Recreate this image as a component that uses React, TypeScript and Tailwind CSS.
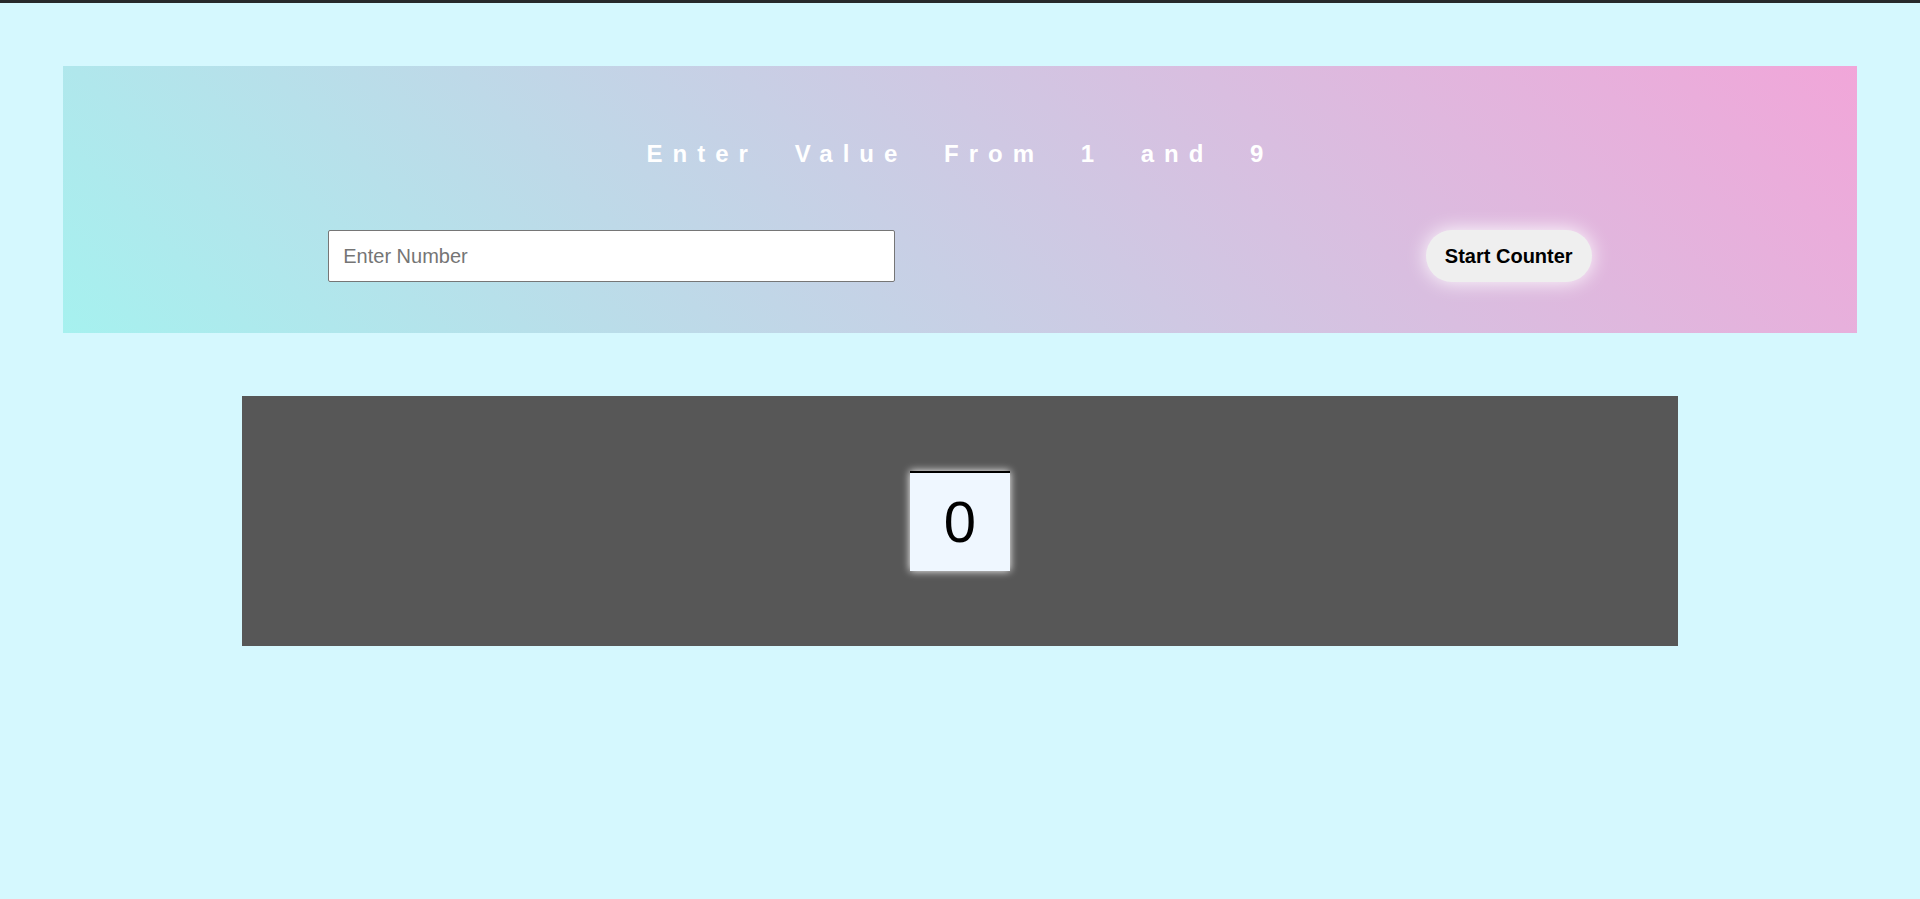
import React, { useState } from 'react';

const App: React.FC = () => {
    const [value, setValue] = useState('');
    const [count] = useState(0);

    return (
        <div className="min-h-[899px] bg-[#d5f8fe] border-t-[3px] border-[#27292b] font-['Liberation_Sans',Arial,sans-serif] pt-[63px]">
            <header className="w-[1794px] mx-auto bg-[linear-gradient(45deg,#a6f1ef,#f1a6d9)] pt-[74px] pb-[51px]">
                <h1 className="text-center text-white font-bold text-[24px] leading-[28px] tracking-[10px] [word-spacing:20px] mb-[62px]">
                    Enter Value From 1 and 9
                </h1>
                <div className="flex justify-around items-center">
                    <input
                        type="number"
                        value={value}
                        onChange={(e) => setValue(e.target.value)}
                        placeholder="Enter Number"
                        className="w-[567px] h-[52px] px-[14px] text-[20px] bg-white text-black border border-[#767676] rounded-[2px] placeholder:text-[#757575] outline-none"
                    />
                    <button className="w-[166px] h-[52px] rounded-full bg-[#efefef] text-black font-bold text-[20px] shadow-[0_0_20px_#fff]">
                        Start Counter
                    </button>
                </div>
            </header>

            <section className="w-[1436px] h-[250px] mx-auto mt-[63px] bg-[#575757] flex items-center justify-center">
                <div className="w-[100px] h-[100px] bg-[#eff7ff] border-t-2 border-black shadow-[0_0_8px_#fff] flex items-center justify-center text-[58px] text-black leading-none">
                    {count}
                </div>
            </section>
        </div>
    );
};

export default App;
